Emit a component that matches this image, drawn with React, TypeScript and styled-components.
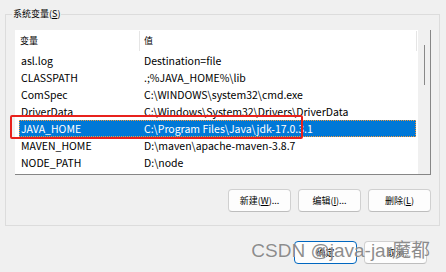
import React from 'react'
import styled, { createGlobalStyle } from 'styled-components'

const GlobalStyle = createGlobalStyle`
  html, body {
    margin: 0;
    padding: 0;
    background: #f0f0f0;
  }
  body {
    width: 446px;
    height: 272px;
    overflow: hidden;
    font-family: "Noto Sans CJK SC", "Noto Sans", sans-serif;
    color: #000;
  }
`

const Page = styled.div`
  position: relative;
  width: 446px;
  height: 272px;
  box-sizing: border-box;
  padding: 14px 0 0 5px;
`

const Group = styled.div`
  position: relative;
  box-sizing: border-box;
  width: 435px;
  height: 212px;
  border: 1px solid #dcdcdc;
  padding: 15px 8px 0 9px;
`

const GroupLabel = styled.span`
  position: absolute;
  top: -8px;
  left: 6px;
  padding: 0 1px;
  background: #f0f0f0;
  font-size: 9px;
  line-height: 14px;
  color: #000;

  u {
    text-decoration: underline;
  }
`

const ListBox = styled.div`
  position: relative;
  display: flex;
  box-sizing: border-box;
  width: 416px;
  height: 145px;
  background: #fff;
  border-right: 1px solid #868686;
  border-bottom: 1px solid #868686;
`

const ListBody = styled.div`
  flex: 1;
  display: flex;
  flex-direction: column;
`

const HeaderRow = styled.div`
  display: flex;
  height: 22px;
  align-items: flex-start;
`

const HeaderCell = styled.div<{ $w: number; $pad: number }>`
  box-sizing: border-box;
  width: ${(p) => p.$w}px;
  height: 20px;
  margin-top: 1px;
  padding-left: ${(p) => p.$pad}px;
  border-right: 1px solid #e5e5e5;
  font-size: 9px;
  line-height: 20px;
`

const Row = styled.div<{ $selected?: boolean }>`
  display: flex;
  box-sizing: border-box;
  width: 397px;
  height: 17px;
  margin-left: 4px;
  font-size: 10.5px;
  line-height: 15px;
  white-space: nowrap;
  background: ${(p) => (p.$selected ? '#0078d7' : 'transparent')};
  color: ${(p) => (p.$selected ? '#fff' : '#000')};
  border: 1px ${(p) => (p.$selected ? 'dotted #f39a3c' : 'solid transparent')};
`

const NameCell = styled.div`
  width: 123px;
  padding-left: 1px;
  box-sizing: border-box;
`

const ValueCell = styled.div`
  flex: 1;
  padding-left: 1px;
`

const ScrollTrack = styled.div`
  width: 12px;
  background: #f0f0f0;
  display: flex;
  justify-content: center;
`

const ScrollThumb = styled.div`
  width: 1px;
  height: 40px;
  margin-top: 15px;
  background: #888;
`

const Highlight = styled.div`
  position: absolute;
  left: -5px;
  top: 85px;
  width: 293px;
  height: 24px;
  box-sizing: border-box;
  border: 2px solid #e8211c;
  border-radius: 2px;
  pointer-events: none;
`

const ButtonRow = styled.div<{ $top: number; $right: number }>`
  display: flex;
  justify-content: flex-end;
  gap: 7px;
  margin-top: ${(p) => p.$top}px;
  margin-right: ${(p) => p.$right}px;
`

const Button = styled.button<{ $primary?: boolean }>`
  box-sizing: border-box;
  width: 63px;
  height: 23px;
  padding: 0;
  background: #fdfdfd;
  border: 1px solid ${(p) => (p.$primary ? '#0067c0' : '#d0d0d0')};
  border-bottom-color: ${(p) => (p.$primary ? '#0067c0' : '#bdbdbd')};
  border-radius: 4px;
  font-family: "Noto Sans CJK SC", "Noto Sans", sans-serif;
  font-size: 9px;
  color: #000;
`

const Watermark = styled.div`
  position: absolute;
  right: 16px;
  top: 239px;
  font-family: "Liberation Sans", "Noto Sans CJK SC", sans-serif;
  font-size: 19px;
  line-height: 24px;
  color: rgba(120, 120, 120, 0.85);
  text-shadow: 0 0 1px rgba(255, 255, 255, 0.8);
  white-space: nowrap;
  pointer-events: none;
`

const vars = [
  ['asl.log', 'Destination=file'],
  ['CLASSPATH', '.;%JAVA_HOME%\\lib'],
  ['ComSpec', 'C:\\WINDOWS\\system32\\cmd.exe'],
  ['DriverData', 'C:\\Windows\\System32\\Drivers\\DriverData'],
  ['JAVA_HOME', 'C:\\Program Files\\Java\\jdk-17.0.3.1'],
  ['MAVEN_HOME', 'D:\\maven\\apache-maven-3.8.7'],
  ['NODE_PATH', 'D:\\node'],
]

const App: React.FC = () => {
  return (
    <Page>
      <GlobalStyle />
      <Group>
        <GroupLabel>
          系统变量(<u>S</u>)
        </GroupLabel>
        <ListBox>
          <ListBody>
            <HeaderRow>
              <HeaderCell $w={125} $pad={5}>
                变量
              </HeaderCell>
              <HeaderCell $w={277} $pad={4}>
                值
              </HeaderCell>
            </HeaderRow>
            {vars.map(([name, value]) => (
              <Row key={name} $selected={name === 'JAVA_HOME'}>
                <NameCell>{name}</NameCell>
                <ValueCell>{value}</ValueCell>
              </Row>
            ))}
          </ListBody>
          <ScrollTrack>
            <ScrollThumb />
          </ScrollTrack>
          <Highlight />
        </ListBox>
        <ButtonRow $top={14} $right={0}>
          <Button>新建(<u>W</u>)...</Button>
          <Button>编辑(<u>I</u>)...</Button>
          <Button>删除(<u>L</u>)</Button>
        </ButtonRow>
      </Group>
      <ButtonRow $top={15} $right={19}>
        <Button $primary>确定</Button>
        <Button>取消</Button>
      </ButtonRow>
      <Watermark>CSDN @java-jar魔都</Watermark>
    </Page>
  )
}

export default App
